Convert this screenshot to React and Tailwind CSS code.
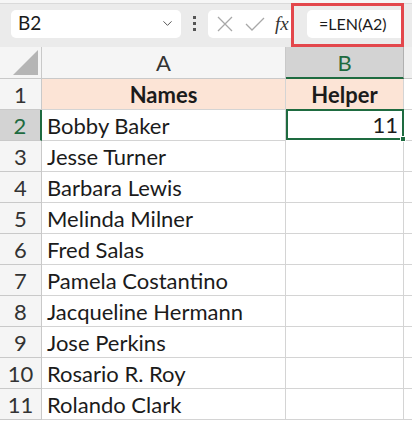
import { ChevronDown } from "lucide-react";

const names = [
  "Bobby Baker",
  "Jesse Turner",
  "Barbara Lewis",
  "Melinda Milner",
  "Fred Salas",
  "Pamela Costantino",
  "Jacqueline Hermann",
  "Jose Perkins",
  "Rosario R. Roy",
  "Rolando Clark",
];

export default function App() {
  return (
    <div className="w-[412px] h-[421px] overflow-hidden bg-white font-['Lato',sans-serif] text-[#1b1b1b]">
      {/* FORMULA BAR */}
      <div className="relative h-[47px] bg-[#ebebeb] border-t-[3px] border-[#f6f6f6]">
        <div className="absolute left-0 right-0 top-0 h-px bg-[#dadada]" />
        <div className="flex items-center h-full pl-[11px] pb-[3px]">
          {/* NAME BOX */}
          <div className="flex items-center justify-between w-[170px] h-[28px] bg-white rounded-[5px] pl-[7px] pr-[6px]">
            <span className="text-[19px]">B2</span>
            <ChevronDown size={15} strokeWidth={1.6} className="text-[#555]" />
          </div>
          {/* DOTS */}
          <div className="flex flex-col gap-[3px] w-[27px] items-center">
            <div className="w-[3px] h-[3px] bg-[#555]" />
            <div className="w-[3px] h-[3px] bg-[#555]" />
            <div className="w-[3px] h-[3px] bg-[#555]" />
          </div>
          {/* CANCEL / ENTER / FX */}
          <div className="flex items-center w-[86px] h-[28px] bg-white rounded-l-[5px] pl-[8px]">
            <svg width="18" height="18" viewBox="0 0 18 18" className="mr-[11px]">
              <path d="M2 2 L16 16 M16 2 L2 16" stroke="#a8a8a8" strokeWidth="1.3" fill="none" />
            </svg>
            <svg width="20" height="18" viewBox="0 0 20 18" className="mr-[10px]">
              <path d="M1 9 L7 15 L19 3" stroke="#a8a8a8" strokeWidth="1.3" fill="none" />
            </svg>
            <span className="font-['Liberation_Serif',serif] italic text-[19px] text-[#333] leading-none">fx</span>
          </div>
          {/* FORMULA */}
          <div className="ml-[13px] flex items-center w-[95px] h-[28px] bg-white rounded-l-[5px] pl-[12px]">
            <span className="text-[16px]">=LEN(A2)</span>
          </div>
        </div>
        {/* HIGHLIGHT */}
        <div className="absolute left-[291px] top-[0px] w-[113px] h-[44px] border-[3px] border-[#e3474c]" />
      </div>

      {/* SHEET */}
      <div className="grid grid-cols-[42px_244px_118px_1fr] text-[22px]">
        {/* header row */}
        <div className="relative h-[32px] bg-[#f5f5f5] border-r border-b border-[#c9c9c9]">
          <svg width="26" height="26" viewBox="0 0 26 26" className="absolute right-[2px] bottom-[2px]">
            <polygon points="25,0 25,25 0,25" fill="#b5b5b5" />
          </svg>
        </div>
        <div className="h-[32px] bg-[#f5f5f5] border-r border-b border-[#c9c9c9] flex items-center justify-center text-[#333]">
          A
        </div>
        <div className="h-[32px] bg-[#d3d3d3] border-r border-[#b0b0b0] border-b-2 border-b-[#1e6b40] flex items-center justify-center text-[#1e6b40]">
          B
        </div>
        <div className="h-[32px] bg-[#efefef] border-b border-[#c9c9c9]" />

        {/* row 1 */}
        <div className="h-[31px] bg-[#f5f5f5] border-r border-b border-[#c9c9c9] flex items-center justify-center text-[#333]">
          1
        </div>
        <div className="h-[31px] bg-[#fce4d6] border-r border-b border-[#d4d4d4] flex items-center justify-center font-bold">
          Names
        </div>
        <div className="h-[31px] bg-[#fce4d6] border-r border-b border-[#d4d4d4] flex items-center justify-center font-bold">
          Helper
        </div>
        <div className="h-[31px] border-b border-[#d4d4d4]" />

        {names.map((name, i) => {
          const row = i + 2;
          const selected = row === 2;
          return [
            <div
              key={"h" + row}
              className={
                selected
                  ? "h-[31px] bg-[#d3d3d3] border-r-2 border-r-[#1e6b40] border-b border-b-[#c9c9c9] flex items-center justify-center text-[#1e6b40]"
                  : "h-[31px] bg-[#f5f5f5] border-r border-b border-[#c9c9c9] flex items-center justify-center text-[#333]"
              }
            >
              {row}
            </div>,
            <div
              key={"a" + row}
              className="h-[31px] border-r border-b border-[#d4d4d4] flex items-center pl-[5px]"
            >
              {name}
            </div>,
            <div
              key={"b" + row}
              className={
                selected
                  ? "relative h-[31px] border-2 border-[#1e6b40] -mt-px flex items-center justify-end pr-[4px]"
                  : "h-[31px] border-r border-b border-[#d4d4d4]"
              }
            >
              {selected && "11"}
              {selected && (
                <div className="absolute right-[-4px] bottom-[-4px] w-[6px] h-[6px] bg-[#1e6b40] border border-white" />
              )}
            </div>,
            <div key={"c" + row} className="h-[31px] border-b border-[#d4d4d4]" />,
          ];
        })}
      </div>
    </div>
  );
}
